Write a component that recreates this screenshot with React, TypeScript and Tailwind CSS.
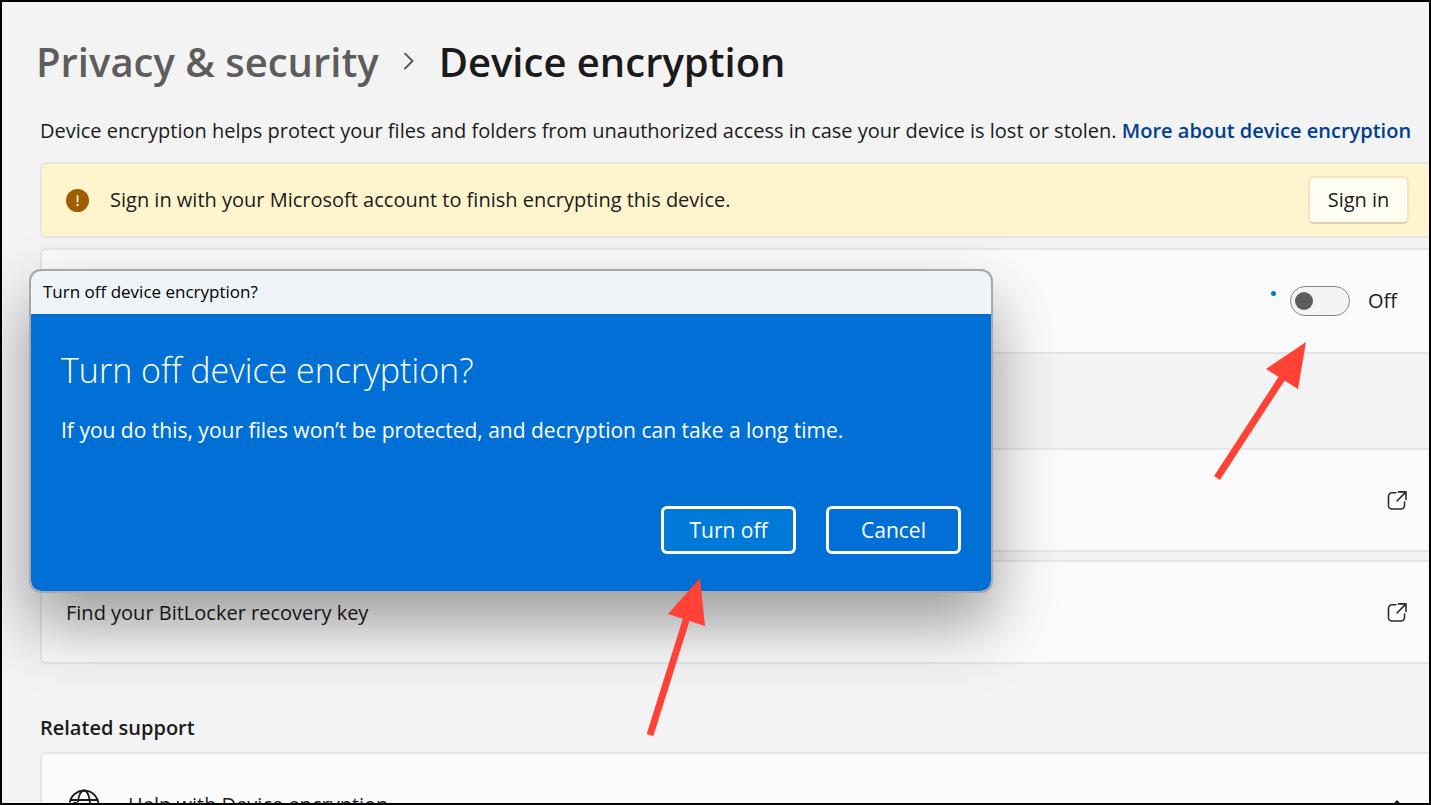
import { useState } from "react";
import type { ReactNode } from "react";

const FONT = "font-['Open_Sans','Noto_Sans',sans-serif]";

function Card({ className = "", children }: { className?: string; children?: ReactNode }) {
    return (
        <div
            className={`flex items-center rounded-l-md border-2 border-r-0 border-[#e5e5e5] ${className}`}
        >
            {children}
        </div>
    );
}

function ExternalIcon() {
    return (
        <svg width="22" height="22" viewBox="0 0 22 22" fill="none" aria-hidden="true">
            <path
                d="M9 2.700H5A3.500 3.500 0 0 0 1.500 6.200v9.300A3.500 3.500 0 0 0 5 19h9A3.500 3.500 0 0 0 17.500 15.500V12"
                stroke="#2b2b2b"
                strokeWidth="1.600"
                strokeLinecap="round"
            />
            <path
                d="M11.500 1.900h7.500v7.500M18.800 2.100L10 11"
                stroke="#2b2b2b"
                strokeWidth="1.600"
                strokeLinecap="round"
                strokeLinejoin="round"
            />
        </svg>
    );
}

function GlobeIcon() {
    return (
        <svg width="32" height="32" viewBox="0 0 32 32" fill="none" stroke="#1b1b1b" strokeWidth="1.800" aria-hidden="true">
            <path d="M1.800 13.500A14.500 14.500 0 1 1 17 30.500" />
            <path d="M10 13C10.500 6 13 1.500 16 1.500S22 7 22 16S19.500 30 17 30.500" />
            <path d="M3 11h26M17 21h12" />
            <circle cx="7.500" cy="19" r="5" />
            <path d="M11 22.500L16 28" />
        </svg>
    );
}

function Arrow({ className, width, height, tail, head }: {
    className: string;
    width: number;
    height: number;
    tail: string;
    head: string;
}) {
    return (
        <svg
            className={`absolute z-20 pointer-events-none ${className}`}
            width={width}
            height={height}
            viewBox={`0 0 ${width} ${height}`}
            aria-hidden="true"
        >
            <path d={tail} stroke="#ff4136" strokeWidth="7" />
            <path d={head} fill="#ff4136" />
        </svg>
    );
}

function ConfirmDialog({ onClose }: { onClose: () => void }) {
    const button =
        "h-12 w-[135px] rounded-md border-3 border-white text-[21px] leading-7";

    return (
        <div
            role="dialog"
            aria-labelledby="dialog-title"
            className="absolute left-[27px] top-[267px] z-10 w-[964px] overflow-hidden rounded-xl border-2 border-[#a8a8a8] bg-[#0070d7] bg-clip-padding text-white shadow-[0_32px_64px_rgba(0,0,0,0.38)]"
        >
            <div className="bg-[#eff4f9] px-3 pb-2 pt-[7px] text-[17px] leading-7 text-black">
                Turn off device encryption?
            </div>
            <div className="px-[30px] pb-[37px] pt-8">
                <h2 id="dialog-title" className="text-[34px] font-light leading-12">
                    Turn off device encryption?
                </h2>
                <p className="mt-[22px] text-[21px] leading-7">
                    If you do this, your files won’t be protected, and decryption can take a long time.
                </p>
                <div className="mt-[62px] flex justify-end gap-[30px]">
                    <button type="button" className={`${button} bg-[#007ad9]`} onClick={onClose}>
                        Turn off
                    </button>
                    <button type="button" className={button} onClick={onClose}>
                        Cancel
                    </button>
                </div>
            </div>
        </div>
    );
}

export default function App() {
    const [dialogOpen, setDialogOpen] = useState(true);
    const [encrypted, setEncrypted] = useState(false);

    return (
        <main
            className={`relative h-screen overflow-hidden border-2 border-black bg-[#f3f3f3] pl-[38px] pt-8 text-[20px] leading-7 text-[#1b1b1b] ${FONT}`}
        >
            <nav aria-label="Breadcrumb" className="-ml-1 flex items-center whitespace-nowrap text-[40px] font-semibold leading-14">
                <a href="#privacy" className="text-[#5d5d5d]">Privacy &amp; security</a>
                <svg className="mx-6" width="12" height="18" viewBox="0 0 12 18" fill="none" aria-hidden="true">
                    <path d="M2 0.500L9.500 8L2 15.500" stroke="#5d5d5d" strokeWidth="2" strokeLinecap="round" strokeLinejoin="round" />
                </svg>
                <h1>Device encryption</h1>
            </nav>

            <p className="mt-[27px] whitespace-nowrap">
                Device encryption helps protect your files and folders from unauthorized access in case your device is lost or stolen.{" "}
                <a href="#more" className="font-semibold text-[#003e92]">More about device encryption</a>
            </p>

            <Card className="mt-[17px] bg-[#fff4ce] py-3 pl-6 pr-5">
                <svg width="24" height="24" viewBox="0 0 24 24" aria-hidden="true">
                    <circle cx="11.500" cy="12.500" r="11.500" fill="#9d5d00" />
                    <path d="M11.500 8v5.500" stroke="#fff4ce" strokeWidth="1.800" strokeLinecap="round" />
                    <circle cx="11.500" cy="17" r="1.200" fill="#fff4ce" />
                </svg>
                <span className="ml-5">Sign in with your Microsoft account to finish encrypting this device.</span>
                <button
                    type="button"
                    className="ml-auto h-12 w-[101px] rounded-md border-2 border-[#f0e6c2] border-b-[#d8cfae] bg-[#fffdf2]"
                >
                    Sign in
                </button>
            </Card>

            <Card className="mt-[10px] justify-end bg-[#fbfbfb] py-9 pr-8">
                <span className="mb-4 mr-[14px] size-[5px] rounded-full bg-[#0078d4]" />
                <label className="flex items-center gap-[18px]">
                    <input
                        type="checkbox"
                        role="switch"
                        checked={encrypted}
                        onChange={e => setEncrypted(e.target.checked)}
                        className="flex h-[30px] w-[60px] appearance-none items-center rounded-full border border-[#868686] bg-[#f4f4f4] px-1 before:size-[18px] before:rounded-full before:bg-[#5d5d5d] checked:justify-end checked:bg-[#0078d4] checked:before:bg-white"
                    />
                    {encrypted ? "On" : "Off"}
                </label>
            </Card>

            <Card className="mt-[94px] min-h-[104px] justify-end bg-[#fbfbfb] pr-5 pt-0.5">
                <a href="#bitlocker" aria-label="BitLocker drive encryption"><ExternalIcon /></a>
            </Card>
            <Card className="mt-2 min-h-[104px] justify-between bg-[#fbfbfb] pl-6 pr-5 pt-0.5">
                <span>Find your BitLocker recovery key</span>
                <a href="#recovery" aria-label="Find your BitLocker recovery key"><ExternalIcon /></a>
            </Card>

            <h2 className="mt-[50px] font-semibold">Related support</h2>
            <Card className="mt-[10px] min-h-[104px] bg-[#fbfbfb] pl-[26px] pr-6 pt-0.5">
                <GlobeIcon />
                <span className="ml-7">Help with Device encryption</span>
                <svg className="ml-auto" width="16" height="10" viewBox="0 0 16 10" fill="none" aria-hidden="true">
                    <path d="M1 8.500L8 1.500L15 8.500" stroke="#1b1b1b" strokeWidth="2" strokeLinecap="round" />
                </svg>
            </Card>

            {dialogOpen && <ConfirmDialog onClose={() => setDialogOpen(false)} />}

            <Arrow
                className="right-[121px] top-[339px]"
                width={94}
                height={140}
                tail="M3 137L70 34"
                head="M92 1L52 28L84 48Z"
            />
            <Arrow
                className="left-[642px] top-[574px]"
                width={64}
                height={162}
                tail="M6 159L44 38"
                head="M56 2L24 38L61 50Z"
            />
        </main>
    );
}
